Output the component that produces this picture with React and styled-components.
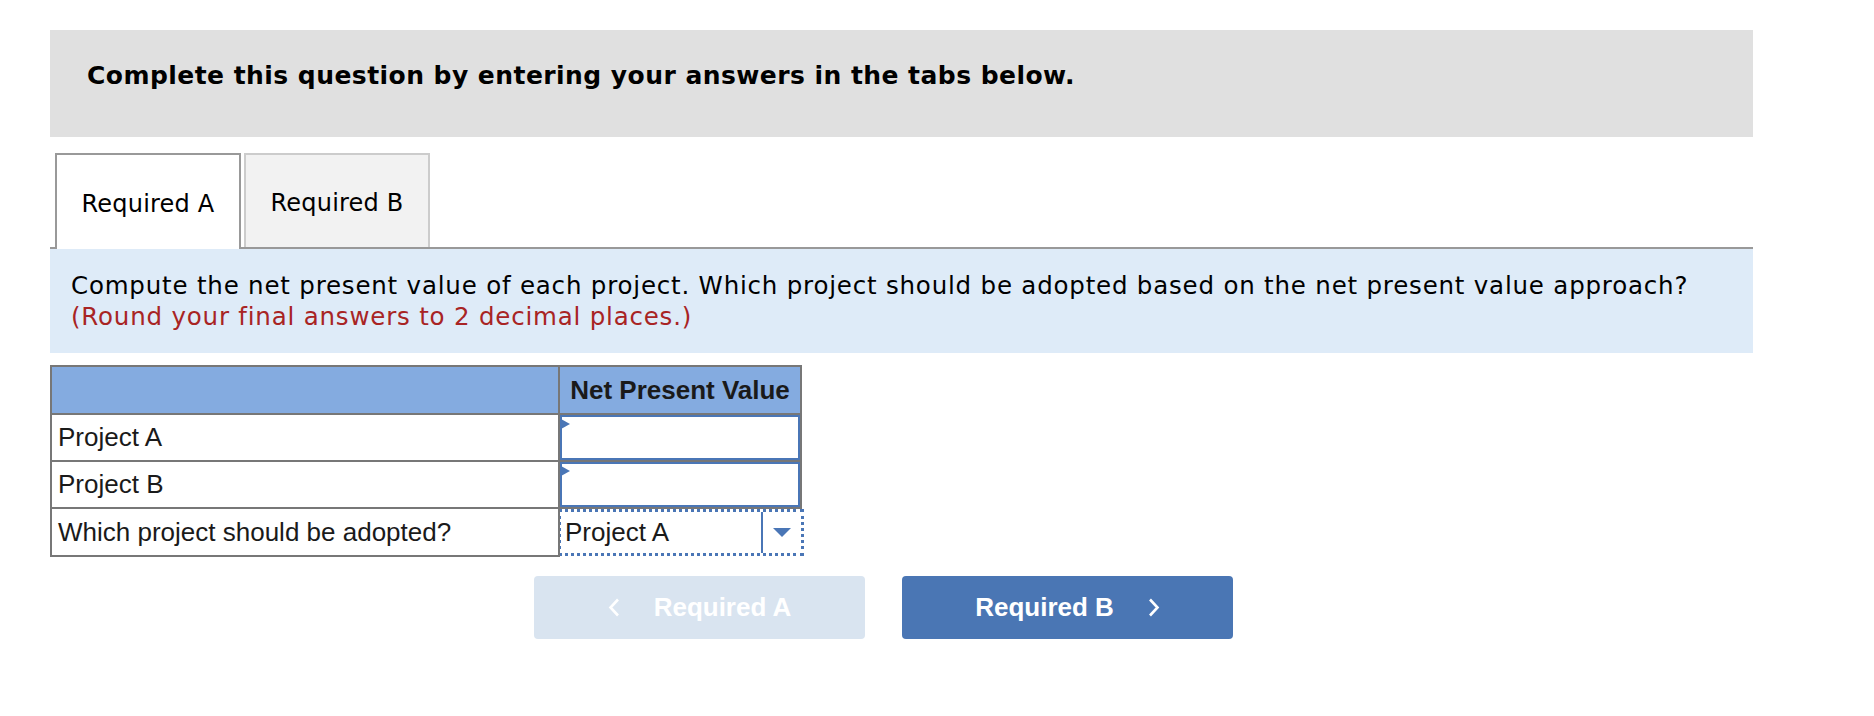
import styled, { createGlobalStyle } from "styled-components";

const GlobalStyle = createGlobalStyle`
  body {
    margin: 0;
    background: #fff;
    font-family: "DejaVu Sans", Verdana, sans-serif;
  }
`;

const ROWS = [
  { id: "a", label: "Project A", kind: "input" },
  { id: "b", label: "Project B", kind: "input" },
  { id: "c", label: "Which project should be adopted?", kind: "select" },
];

const App = () => {
  return (
    <>
      <GlobalStyle />
      <Page>
        <Instructions>
          Complete this question by entering your answers in the tabs below.
        </Instructions>

        <TabBar>
          <Tab $active>Required A</Tab>
          <Tab>Required B</Tab>
        </TabBar>

        <Prompt>
          Compute the net present value of each project. Which project should be
          adopted based on the net present value approach?
          <br />
          <Hint>(Round your final answers to 2 decimal places.)</Hint>
        </Prompt>

        <AnswerTable>
          <colgroup>
            <col style={{ width: 508 }} />
            <col style={{ width: 242 }} />
          </colgroup>
          <thead>
            <tr>
              <HeadCell />
              <HeadCell>Net Present Value</HeadCell>
            </tr>
          </thead>
          <tbody>
            {ROWS.map(({ id, label, kind }) => (
              <tr key={id}>
                <LabelCell>{label}</LabelCell>
                {kind === "input" ? (
                  <InputCell>
                    <Marker />
                    <AnswerInput type="text" />
                  </InputCell>
                ) : (
                  <SelectCell>
                    <SelectBox>
                      <SelectValue>Project A</SelectValue>
                      <SelectArrow>
                        <svg width="18" height="9" viewBox="0 0 18 9">
                          <path d="M0 0 L18 0 L9 9 Z" fill="#4a76b6" />
                        </svg>
                      </SelectArrow>
                    </SelectBox>
                  </SelectCell>
                )}
              </tr>
            ))}
          </tbody>
        </AnswerTable>

        <NavRow>
          <NavButton $disabled>
            <svg width="12" height="19" viewBox="0 0 12 19">
              <path d="M10 1.5 L2.5 9.5 L10 17.5" fill="none" stroke="#fff" strokeWidth="2.6" />
            </svg>
            Required A
          </NavButton>
          <NavButton>
            Required B
            <svg width="12" height="19" viewBox="0 0 12 19">
              <path d="M2 1.5 L9.5 9.5 L2 17.5" fill="none" stroke="#fff" strokeWidth="2.6" />
            </svg>
          </NavButton>
        </NavRow>
      </Page>
    </>
  );
};

export default App;

const Page = styled.div`
  width: 1703px;
  padding: 30px 0 60px 50px;
`;

const Instructions = styled.div`
  height: 107px;
  box-sizing: border-box;
  padding: 32px 0 0 37px;
  background-color: #e0e0e0;
  font-size: 25px;
  font-weight: bold;
  letter-spacing: 0.45px;
  line-height: 28px;
  color: #000;
`;

const TabBar = styled.div`
  display: flex;
  align-items: flex-end;
  gap: 3px;
  margin-top: 16px;
  padding-left: 5px;
  border-bottom: 2px solid #999;
`;

const Tab = styled.div`
  display: flex;
  align-items: center;
  justify-content: center;
  box-sizing: border-box;
  width: 186px;
  height: ${({ $active }) => ($active ? "96px" : "94px")};
  margin-bottom: ${({ $active }) => ($active ? "-2px" : "0")};
  padding-top: 4px;
  border: 2px solid ${({ $active }) => ($active ? "#999" : "#ccc")};
  border-bottom: none;
  background-color: ${({ $active }) => ($active ? "#fff" : "#f2f2f2")};
  font-size: 24px;
  letter-spacing: 0.2px;
  color: #000;
`;

const Prompt = styled.div`
  padding: 21px 20px 21px 21px;
  background-color: #deebf8;
  font-size: 24.5px;
  letter-spacing: 0.8px;
  line-height: 31px;
  color: #000;
`;

const Hint = styled.span`
  color: #a82424;
`;

const AnswerTable = styled.table`
  margin-top: 12px;
  border-collapse: collapse;
  table-layout: fixed;
  width: 752px;
  font-family: "Liberation Sans", Arial, sans-serif;
  font-size: 26px;
  color: #1a1a1a;
`;

const HeadCell = styled.th`
  height: 46px;
  padding: 0;
  border: 2px solid #777;
  background-color: #84abe0;
  font-weight: bold;
  text-align: center;
`;

const LabelCell = styled.td`
  height: 45px;
  padding: 0 6px;
  border: 2px solid #777;
  white-space: nowrap;
`;

const InputCell = styled.td`
  position: relative;
  padding: 0;
  border: 2px solid #777;
`;

const Marker = styled.span`
  position: absolute;
  top: 4px;
  left: 1px;
  width: 0;
  height: 0;
  border-top: 5px solid transparent;
  border-bottom: 5px solid transparent;
  border-left: 9px solid #4a76b6;
`;

const AnswerInput = styled.input`
  display: block;
  box-sizing: border-box;
  width: 100%;
  height: 45px;
  margin: 0;
  border: 2px solid #4a76b6;
  outline: none;
  background: #fff;
  font: inherit;
`;

const SelectCell = styled.td`
  padding: 0;
  border: none;
`;

const SelectBox = styled.div`
  display: flex;
  align-items: stretch;
  box-sizing: border-box;
  height: 47px;
  margin-left: -2px;
  width: 246px;
  border: 3px dotted #4a76b6;
  background: #fff;
`;

const SelectValue = styled.div`
  flex: 1;
  display: flex;
  align-items: center;
  padding-left: 4px;
  border-right: 2px solid #4a76b6;
`;

const SelectArrow = styled.div`
  display: flex;
  align-items: center;
  justify-content: center;
  width: 38px;
`;

const NavRow = styled.div`
  display: flex;
  gap: 37px;
  margin-top: 19px;
  padding-left: 484px;
`;

const NavButton = styled.div`
  display: flex;
  align-items: center;
  justify-content: center;
  gap: 34px;
  width: 331px;
  height: 63px;
  border-radius: 4px;
  background-color: ${({ $disabled }) => ($disabled ? "#d9e4f0" : "#4a76b4")};
  color: #fff;
  font-family: "Liberation Sans", Arial, sans-serif;
  font-size: 26px;
  font-weight: bold;
`;
